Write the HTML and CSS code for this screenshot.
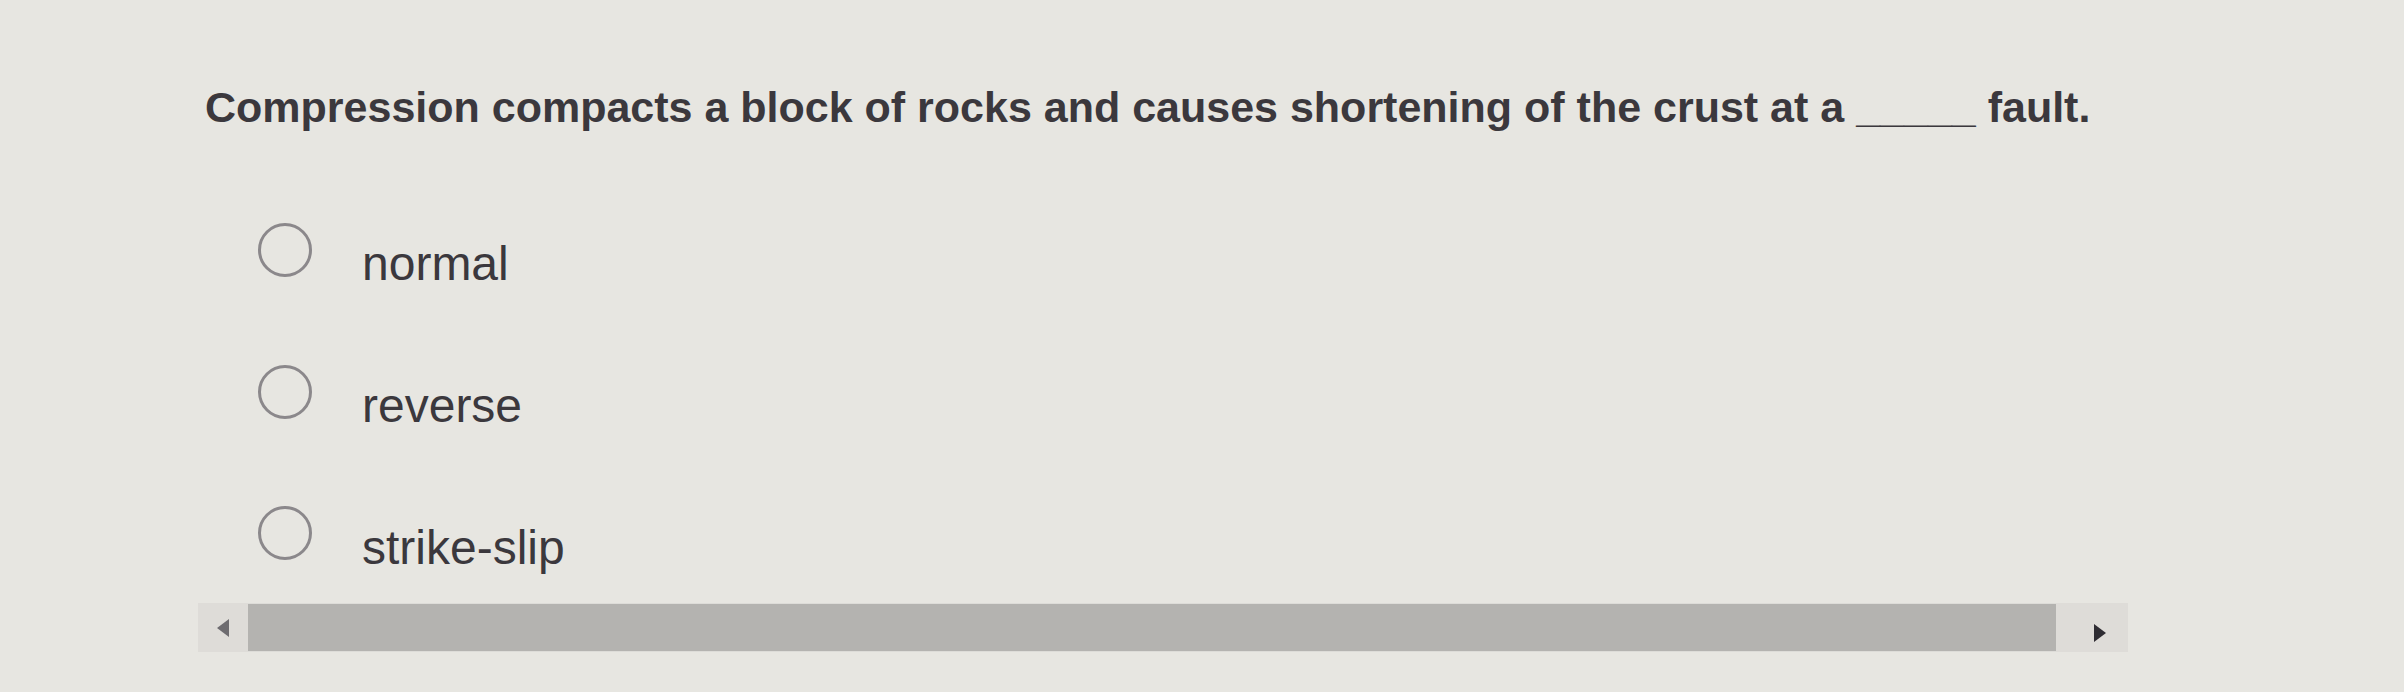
FILE: index.html
```html
<!DOCTYPE html>
<html>
<head>
<meta charset="utf-8">
<link rel="stylesheet" href="styles.css">
</head>
<body>
<div class="page">
  <p class="question">Compression compacts a block of rocks and causes shortening of the crust at a _____ fault.</p>
  <div class="options">
    <div class="option"><span class="radio"></span><span class="label">normal</span></div>
    <div class="option"><span class="radio"></span><span class="label">reverse</span></div>
    <div class="option"><span class="radio"></span><span class="label">strike-slip</span></div>
  </div>
  <div class="scrollbar">
    <div class="sb-btn"><span class="arrow-left"></span></div>
    <div class="sb-thumb"></div>
    <div class="sb-btn sb-right"><span class="arrow-right"></span></div>
  </div>
</div>
</body>
</html>
```
FILE: styles.css
```css
html, body {
  margin: 0;
  padding: 0;
  background: #e7e6e1;
}
body {
  width: 2404px;
  height: 692px;
  overflow: hidden;
  font-family: "Liberation Sans", Arial, sans-serif;
  color: #3b383d;
}
.page {
  display: flex;
  flex-direction: column;
  padding-top: 82px;
}
.question {
  margin: 0 0 0 205px;
  font-size: 43px;
  font-weight: bold;
  line-height: 50px;
  white-space: nowrap;
}
.options {
  display: flex;
  flex-direction: column;
  margin-top: 47px;
  margin-left: 258px;
}
.option {
  display: flex;
  align-items: center;
  height: 142px;
}
.option:last-child {
  height: 140px;
}
.radio {
  width: 48px;
  height: 48px;
  border: 3px solid #8b888b;
  border-radius: 50%;
  flex: none;
}
.label {
  align-self: flex-start;
  font-size: 48px;
  line-height: 56px;
  margin-left: 50px;
  margin-top: 57px;
  white-space: nowrap;
}
.scrollbar {
  display: flex;
  margin-left: 198px;
  width: 1930px;
  height: 49px;
  background: #dddcd8;
}
.sb-btn {
  width: 50px;
  flex: none;
  display: flex;
  align-items: center;
  justify-content: center;
  background: #dedcd8;
}
.sb-right {
  width: 72px;
}
.sb-thumb {
  flex: 1;
  background: #b4b3b0;
  margin: 1px 0;
}
.arrow-left {
  width: 0;
  height: 0;
  border-top: 9px solid transparent;
  border-bottom: 9px solid transparent;
  border-right: 12px solid #6e6c70;
}
.arrow-right {
  width: 0;
  height: 0;
  border-top: 9px solid transparent;
  border-bottom: 9px solid transparent;
  border-left: 12px solid #2f2d33;
  margin-left: 16px;
  margin-top: 10px;
}
```
